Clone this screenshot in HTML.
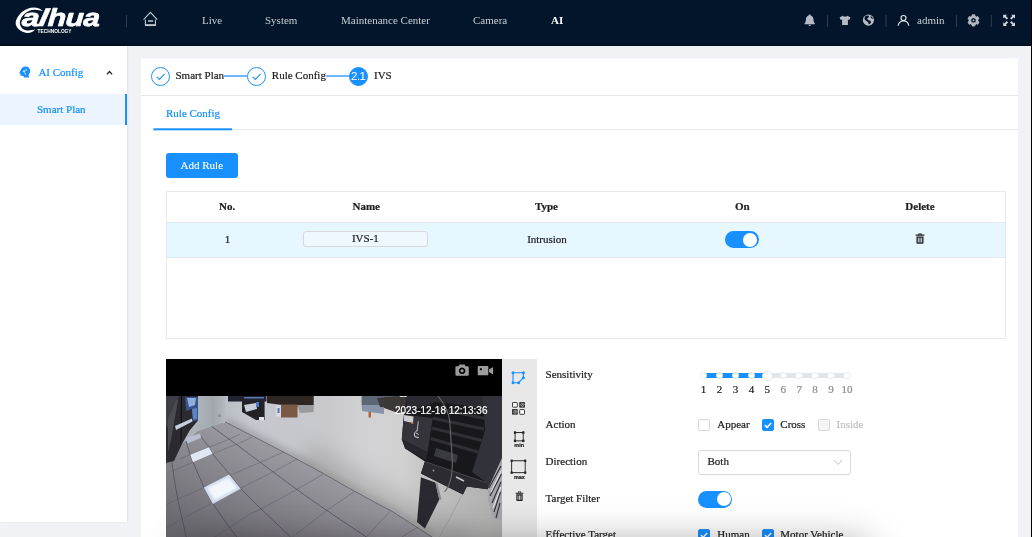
<!DOCTYPE html>
<html lang="en">
<head>
<meta charset="utf-8">
<title>AI Config - IVS</title>
<style>
*{box-sizing:border-box;margin:0;padding:0}
html,body{width:1032px;height:537px;overflow:hidden}
body{-webkit-text-stroke:.22px;will-change:transform;background:#f0f2f5;font-family:"Liberation Serif",serif;font-size:11px;color:#1f1f1f;position:relative}
.abs{position:absolute}
#hdr{position:absolute;left:0;top:0;width:1032px;height:46px;background:linear-gradient(#02152b 0,#02152b 43px,#020f21 45px,#020f21 46px)}
#hdr .nav{position:absolute;top:0;height:46px;line-height:41px;color:#c9cdd4;font-size:11px;white-space:nowrap;-webkit-text-stroke:0}
#hdr .sep{position:absolute;top:15px;width:1px;height:12px;background:#3c4a5e}
#side{position:absolute;left:0;top:46px;width:127px;height:476px;background:#fff;box-shadow:1px 0 2px rgba(0,21,41,.07)}
#side .grp{position:absolute;left:38.4px;top:18px;color:#1890ff;font-size:11px;line-height:16px}
#side .sel{position:absolute;left:0;top:48px;width:127px;height:31px;background:#ecf5ff;border-right:2px solid #1890ff}
#side .sel span{position:absolute;left:37px;top:7px;color:#1890ff;font-size:11px;line-height:16px}
#main{position:absolute;left:141px;top:58px;width:877px;height:479px;background:#fff;box-shadow:inset 0 1px 0 #f8f9fa}
.t{position:absolute;white-space:nowrap;line-height:16px;font-size:11px}
.b{font-weight:bold}

#steps .circ{position:absolute;top:9px;width:19px;height:19px;border-radius:50%;border:1px solid #1890ff;background:#fff}
#steps .circ svg{position:absolute;left:0;top:0}
#steps .ln{position:absolute;top:17px;height:2px;background:linear-gradient(#a9d5ff 0,#58acff 40%,#58acff 70%,#c5e2ff 100%)}
.hline{position:absolute;left:0;width:877px;height:1px;background:#e8e8e8}
#btn{position:absolute;left:25px;top:95.2px;width:71.6px;height:25px;background:#1890ff;border-radius:3px;color:#fff;text-align:center;line-height:24px;-webkit-text-stroke:.1px;font-size:11px}
#tbl{position:absolute;left:25px;top:133px;width:839.500px;height:148px;border:1px solid #e8e8e8}
#tbl .hd{position:absolute;left:0;top:0;width:838px;height:31px;border-bottom:1px solid #e8e8e8}
#tbl .row{position:absolute;left:0;top:31px;width:838px;height:35px;background:#e6f7ff;border-bottom:1px solid #e8e8e8}
.c{position:absolute;transform:translateX(-50%);white-space:nowrap;font-size:11px;line-height:14px}
.sw{position:absolute;width:34px;height:17px;border-radius:9px;background:#1890ff}
.sw i{position:absolute;right:1.5px;top:1.5px;width:14px;height:14px;border-radius:50%;background:#fff}
.cb{position:absolute;width:12px;height:12px;border:1px solid #d9d9d9;border-radius:2px;background:#fff}
.cb.on{background:#1890ff;border-color:#1890ff}
.cb.dis{background:#f5f5f5}
.cb svg{position:absolute;left:-1px;top:-1px}
</style>
</head>
<body>
<div id="hdr">
  <svg class="abs" style="left:0;top:0" width="1032" height="46" viewBox="0 0 1032 46">
    <g id="logo" fill="#fff" stroke="#fff" stroke-width="0.7" stroke-linejoin="round">
      <path stroke="none" d="M43.2 11.2 C42.5 10.8 40.6 9.1 39.0 8.5 C37.4 7.9 35.6 7.5 33.7 7.5 C31.8 7.5 29.7 7.9 27.7 8.7 C25.7 9.5 23.4 10.8 21.7 12.3 C20.0 13.8 18.3 16.0 17.3 17.7 C16.3 19.4 15.8 20.9 15.7 22.5 C15.6 24.1 16.1 25.8 17.0 27.2 C17.9 28.6 19.5 30.1 21.2 31.1 C22.9 32.1 25.3 32.8 27.1 33.0 C28.9 33.2 30.5 32.7 31.9 32.1 C33.2 31.5 34.7 30.0 35.2 29.6  C34.7 29.7 33.2 30.0 31.9 30.1 C30.5 30.2 28.6 30.6 27.1 30.4 C25.6 30.2 24.0 29.7 22.9 28.9 C21.8 28.1 20.9 26.7 20.4 25.5 C19.9 24.3 19.7 23.2 19.9 21.9 C20.1 20.6 20.6 19.1 21.4 17.7 C22.2 16.3 23.5 14.7 24.9 13.5 C26.2 12.3 27.9 11.3 29.5 10.7 C31.1 10.1 32.7 9.9 34.3 9.8 C35.9 9.7 37.5 10.0 39.0 10.2 C40.5 10.4 42.5 11.0 43.2 11.2Z"/>
      <text transform="translate(21.5 26.3) skewX(-3) scale(1.3 1)" font-family="Liberation Sans, sans-serif" font-weight="bold" font-style="italic" font-size="24.6">a</text>
      <text transform="translate(37.600 26.300) skewX(-9) scale(1.450 1)" stroke-width=".3" font-family="Liberation Sans, sans-serif" font-weight="bold" font-style="italic" font-size="24.600">l</text>
      <text transform="translate(47.4 26.3) skewX(-3) scale(1.22 1)" font-family="Liberation Sans, sans-serif" font-weight="bold" font-style="italic" font-size="24.6" letter-spacing="-0.4">hua</text>
      <text x="37.6" y="33" stroke="none" font-family="Liberation Sans, sans-serif" font-weight="bold" font-size="4.6" textLength="34" lengthAdjust="spacingAndGlyphs">TECHNOLOGY</text>
    </g>
    <g id="home" fill="none" stroke="#c5c9d0">
      <path d="M143.6 19.7 L150.4 12.4 L157.2 19.7" stroke-width="1.1"/>
      <path d="M145.4 19.8 V25.1 H155.4 V19.8" stroke-width="1.1"/>
      <path d="M145 25.2 H155.8" stroke-width="1.7"/>
      <path d="M148 21 H153" stroke-width="1.5"/>
    </g>
    <g fill="#b6bbc5">
      <path d="M809.7 14.4 c.7 0 1.1.5 1.1 1.1 c2 .6 2.7 2.400 2.700 4.200 c0 2 .6 3 1.400 3.700 v.9 h-10.400 v-.9 c.8-.7 1.400-1.700 1.400-3.700 c0-1.800.7-3.600 2.700-4.200 c0-.6.4-1.100 1.100-1.100z M808.400 24.800 h2.600 c0 .7-.6 1.100-1.300 1.100 s-1.300-.4-1.300-1.100z"/>
      <path d="M842.600 15.800 c.8 1.200 4 1.200 4.800 0 l3 1.700 l-1.200 2.400 l-1.300-.5 v5.500 h-5.800 v-5.500 l-1.300.5 l-1.200-2.400z"/>
      <circle cx="868.4" cy="20.100" r="5.600"/>
      <path d="M972.03 16.15 L972.20 14.75 L974.80 14.75 L974.97 16.15 L976.45 17.00 L977.74 16.44 L979.05 18.70 L977.92 19.54 L977.92 21.26 L979.05 22.10 L977.74 24.36 L976.45 23.80 L974.97 24.65 L974.80 26.05 L972.20 26.05 L972.03 24.65 L970.55 23.80 L969.26 24.36 L967.95 22.10 L969.08 21.26 L969.08 19.54 L967.95 18.70 L969.26 16.44 L970.55 17.00Z M973.5 17.7 a2.7 2.7 0 1 0 .01 0z" fill-rule="evenodd" stroke="#b6bbc5" stroke-width=".8" stroke-linejoin="round"/>
      <circle cx="973.5" cy="20.400" r=".9"/>
    </g>
    <g fill="#02152b">
      <path d="M865.200 16.300 c1.200-.8 2.600-.9 3.400-.6 l.4 1.200 l-1.400 1 l-.2 1.400 l1.600 1.200 l1.600.2 l.4 1.600 l-1 1.800 l-1.200.2 l-.6-1.800 l-1.600-1.400 l-1.600-1 l-.6-1.800z M870.800 16 l1.600 1.400 l.6 1.600 l-1.400-.4 l-1-1.400z" />
    </g>
    <g id="user" fill="none" stroke="#dfe2e7" stroke-width="1.200">
      <circle cx="903.500" cy="18" r="2.500"/>
      <path d="M898.200 25.800 c.4-3.200 2.600-4.800 5.300-4.800 s4.900 1.600 5.300 4.800"/>
    </g>
    <g id="full" fill="#d5d8de">
      <path d="M1003.200 14.700 h3.800 l-1.200 1.200 l2.300 2.300 l-1.400 1.400 l-2.300-2.300 l-1.200 1.200z"/>
      <path d="M1015 14.700 v3.800 l-1.200-1.200 l-2.300 2.300 l-1.400-1.400 l2.300-2.300 l-1.200-1.200z"/>
      <path d="M1003.200 26 v-3.800 l1.200 1.200 l2.300-2.300 l1.400 1.400 l-2.300 2.300 l1.200 1.200z"/>
      <path d="M1015 26 h-3.800 l1.200-1.200 l-2.300-2.300 l1.400-1.400 l2.300 2.300 l1.200-1.200z"/>
    </g>
    <g stroke="#2f3d53" stroke-width="1">
      <path d="M126.500 15 V27.300 M827.500 15 V27 M886 15 V27 M956.500 15 V27 M991.300 15 V27"/>
    </g>
  </svg>
  <div class="nav" style="left:202px">Live</div>
  <div class="nav" style="left:265px">System</div>
  <div class="nav" style="left:341px">Maintenance Center</div>
  <div class="nav" style="left:473px">Camera</div>
  <div class="nav b" style="left:551px;color:#fff">AI</div>
  <div class="nav" style="left:917px">admin</div>
</div>
<div id="side">
  <svg class="abs" style="left:19px;top:19.500px" width="12" height="13" viewBox="0 0 12 13"><g fill="#1890ff"><circle cx="6.500" cy="5.100" r="4.700"/><path d="M2.300 3.200 L0.200 7.100 L1.400 7.600 L1.400 9 Q1.400 9.700 2.200 9.700 L4.600 9.900 L5 11.500 L10.200 11.500 L9.300 8.500 L5 6Z"/></g><g fill="#fff" stroke="#fff" stroke-width=".55"><path d="M4.900 5.400 L7.300 3.900 M4.900 5.400 L6.500 7.900" fill="none"/><circle cx="4.900" cy="5.400" r=".6"/><circle cx="7.300" cy="3.900" r=".3"/><circle cx="6.500" cy="7.900" r=".3"/></g></svg>
  <div class="grp">AI Config</div>
  <svg class="abs" style="left:106.400px;top:24.200px" width="7" height="5.300" viewBox="0 0 8 6"><path d="M1 5 L4 1.700 L7 5" fill="none" stroke="#222" stroke-width="1.500"/></svg>
  <div class="sel"><span>Smart Plan</span></div>
</div>
<div id="main">
  <div id="steps">
    <div class="circ" style="left:10px"><svg width="17" height="17" viewBox="0 0 17 17"><path d="M4.6 8.8 L7.4 11.4 L12.6 5.8" fill="none" stroke="#1890ff" stroke-width="1.1"/></svg></div>
    <div class="t" style="left:34.5px;top:8.5px">Smart Plan</div>
    <div class="ln" style="left:83px;width:23px"></div>
    <div class="circ" style="left:106px"><svg width="17" height="17" viewBox="0 0 17 17"><path d="M4.6 8.8 L7.4 11.4 L12.6 5.8" fill="none" stroke="#1890ff" stroke-width="1.1"/></svg></div>
    <div class="t" style="left:130.800px;top:8.5px">Rule Config</div>
    <div class="ln" style="left:185px;width:24px"></div>
    <div class="circ" style="left:208px;background:#1890ff"></div>
    <div class="t" style="left:208px;top:10.300px;width:19px;text-align:center;color:#fff;-webkit-text-stroke:0;font-family:'Liberation Sans',sans-serif;font-size:11.500px;letter-spacing:-0.5px;text-indent:-0.5px">2.1</div>
    <div class="t" style="left:233px;top:8.5px">IVS</div>
  </div>
  <div class="hline" style="top:37px"></div>
  <div class="t" style="left:25px;top:46.5px;color:#1890ff">Rule Config</div>
  <div class="hline" style="top:71px;left:12px;width:865px;background:#ededed"></div>
  <svg class="abs" style="left:0;top:68px" width="120" height="6"><rect x="12.3" y="2.300" width="78.800" height="2" fill="#1890ff"/></svg>
  <div id="btn">Add Rule</div>
  <div id="tbl">
    <div class="hd">
      <div class="c b" style="left:60.200px;top:7px">No.</div>
      <div class="c b" style="left:199.200px;top:7px">Name</div>
      <div class="c b" style="left:379.500px;top:7px">Type</div>
      <div class="c b" style="left:575.300px;top:7px">On</div>
      <div class="c b" style="left:753px;top:7px">Delete</div>
    </div>
    <div class="row">
      <div class="c" style="left:60.400px;top:9px">1</div>
      <div class="abs" style="left:136.300px;top:8px;width:125.200px;height:16px;border:1px solid #d9d9d9;border-radius:3px;background:#edf9ff;text-align:center;font-size:11px;line-height:13px;text-indent:-1px">IVS-1</div>
      <div class="c" style="left:380px;top:9px">Intrusion</div>
      <div class="sw" style="left:557.700px;top:8.400px"><i></i></div>
      <svg class="abs" style="left:747.800px;top:10.300px" width="10" height="11.200" viewBox="0 0 11 12"><path d="M3.6 0.3h3.8v1.3h2.9v1.3H0.7V1.6h2.9z M4.6 1.1v0.5h1.8V1.1z M1.6 3.7h7.8v7.2q0 .8-.8.8H2.4q-.8 0-.8-.8z M3.1 5v5.3h1V5z M5 5v5.3h1V5z M6.9 5v5.3h1V5z" fill="#222" fill-rule="evenodd"/></svg>
    </div>
  </div>
  <div id="vid" class="abs" style="left:25px;top:301px;width:336px;height:178px;background:#000;overflow:hidden">
    <svg class="abs" style="left:0;top:37px" width="336" height="141" viewBox="166 396 336 141">
      <defs>
        <linearGradient id="wall" gradientUnits="userSpaceOnUse" x1="198" y1="0" x2="502" y2="0"><stop offset="0" stop-color="#aeb3ba"/><stop offset=".09" stop-color="#bbbfc6"/><stop offset=".17" stop-color="#c4c7ce"/><stop offset=".42" stop-color="#c8c8cc"/><stop offset=".55" stop-color="#d2d2d4"/><stop offset=".67" stop-color="#d1d1d2"/><stop offset=".8" stop-color="#bebebe"/><stop offset="1" stop-color="#afafae"/></linearGradient>
        <linearGradient id="lwall" gradientUnits="userSpaceOnUse" x1="196" y1="0" x2="225" y2="0"><stop offset="0" stop-color="#aeb4bc"/><stop offset=".6" stop-color="#a3a8af"/><stop offset="1" stop-color="#b2b6bd"/></linearGradient>
        <linearGradient id="floor" gradientUnits="userSpaceOnUse" x1="166" y1="537" x2="219.600" y2="419.100"><stop offset="0" stop-color="#65636a"/><stop offset="1" stop-color="#9d9ba2"/></linearGradient>
        <filter id="bl" filterUnits="userSpaceOnUse" x="100" y="300" width="500" height="400"><feGaussianBlur stdDeviation="3"/></filter>
        <filter id="bl2" filterUnits="userSpaceOnUse" x="100" y="300" width="500" height="400"><feGaussianBlur stdDeviation="10"/></filter>
        <filter id="bl1"><feGaussianBlur stdDeviation=".8"/></filter>
      </defs>
      <rect x="166" y="396" width="336" height="141" fill="url(#wall)"/>
      <path d="M300 460 Q320 471 333.5 479.3 T391 510.7 L432 537 L470 545" fill="none" stroke="#8c8c8c" stroke-width="40" opacity=".4" filter="url(#bl2)"/>
      <path d="M224.9 421.8 Q300 460 333.5 479.3 T391 510.7 L432 537" fill="none" stroke="#8a8a8d" stroke-width="10" opacity=".5" filter="url(#bl)"/>
      <path d="M166 463 L182 444 L198 431 L224.9 421.8 Q300 460 333.5 479.3 T391 510.7 L432 537 L166 537 Z" fill="url(#floor)"/>
      <path d="M224.9 421.8 Q300 460 333.5 479.3 T391 510.7 L432 537" fill="none" stroke="#55535b" stroke-width="1" opacity=".7"/>
      <path d="M211.0 426.0 C215.8 429.5 231.6 440.9 240.0 447.2 C248.4 453.4 252.4 456.6 261.7 463.5 C271.0 470.4 285.2 481.0 296.0 488.8 C306.8 496.6 315.0 502.4 326.7 510.4 C338.4 518.4 359.8 532.6 366.4 537.0 M199.0 434.0 C200.7 436.2 206.6 443.9 208.9 447.2 C211.2 450.5 209.0 449.1 212.6 453.8 C216.2 458.5 225.7 469.5 230.3 475.2 C235.0 480.9 235.1 482.3 240.5 488.2 C245.9 494.1 254.5 502.5 262.9 510.6 C271.2 518.7 286.0 532.6 290.6 537.0 M186.0 441.0 C186.7 443.3 189.0 451.2 190.2 454.7 C191.4 458.2 190.7 456.8 193.0 462.2 C195.3 467.6 200.9 480.5 204.2 487.3 C207.5 494.1 208.7 496.9 212.6 503.1 C216.5 509.3 223.5 519.0 227.5 524.6 C231.5 530.2 235.2 534.9 236.8 537.0 M172.0 462.0 C172.2 464.1 172.5 467.9 173.5 474.3 C174.5 480.7 176.1 490.5 178.1 500.4 C180.1 510.3 184.2 527.8 185.6 533.9 C187.0 540.0 186.2 536.5 186.3 537.0" fill="none" stroke="#45434d" stroke-width=".9" opacity=".72"/>
      <path d="M171.6 471.5 C175.2 469.9 186.2 465.1 193.0 462.2 C199.8 459.2 204.7 457.1 212.6 453.8 C220.5 450.5 233.9 445.4 240.5 442.6 C247.1 439.8 250.1 437.9 252.0 437.0 M180.0 459.0 C181.7 458.3 185.4 456.7 190.2 454.7 C195.0 452.7 202.7 449.7 208.9 447.2 C215.1 444.7 222.3 442.0 227.5 439.8 C232.7 437.6 237.9 435.0 240.0 434.0 M166.0 505.0 C167.9 504.1 170.8 502.3 177.2 499.4 C183.6 496.4 195.3 491.3 204.2 487.3 C213.0 483.3 220.5 479.6 230.3 475.2 C240.1 470.8 254.0 465.1 262.9 461.2 C271.8 457.3 280.2 453.5 283.6 452.0 M166.0 528.3 C169.3 526.4 177.8 521.3 185.6 517.1 C193.4 512.9 203.4 507.9 212.6 503.1 C221.8 498.3 230.9 493.2 240.5 488.2 C250.1 483.2 260.9 478.1 270.3 473.3 C279.7 468.5 292.4 461.6 296.8 459.2 M214.0 537.0 C215.0 536.5 214.3 537.5 220.0 533.9 C225.7 530.3 240.8 519.7 248.0 515.3 C255.2 510.9 255.2 512.1 263.5 507.7 C271.8 503.3 287.9 494.4 297.8 488.8 C307.7 483.2 318.9 476.7 323.1 474.3 M292.4 537.0 C298.4 532.4 318.1 517.1 328.5 509.5 C338.9 501.9 350.3 494.5 354.7 491.5 M366.4 537.0 C370.3 532.7 386.0 515.6 389.9 511.3 M418.0 527.0 C415.3 528.7 404.7 535.3 402.0 537.0" fill="none" stroke="#55535c" stroke-width=".7" opacity=".62"/>
      <path d="M185.3 437.7 L200.1 433.6 L201.2 437.7 L187.6 443.4Z" fill="#b9bfce"/>
      <path d="M190.2 454.7 L208.9 447.2 L212.6 453.8 L193 462.2Z" fill="#dfe7f2"/>
      <path d="M203.800 487.500 L229.200 474.600 L240.600 488.700 L212.800 504Z" fill="#cfdbea"/>
      <path d="M207.500 488 L228.500 477.500 L237 488 L214.500 500Z" fill="#f1f7fc" filter="url(#bl1)"/>
      <rect x="166" y="396" width="59" height="27" fill="url(#lwall)"/>
      <path d="M198 396 L224.9 396 L224.9 421.8 L198 431Z" fill="url(#lwall)"/>
      <rect x="218.5" y="414.5" width="2" height="2.5" fill="#83878e"/>
      <rect x="222.600" y="396" width="2.600" height="26" fill="#b4b8be" opacity=".8"/>
      <path d="M166 396 L198 396 L198 420.500 L190 430 L182 444 L174 461 L166 463Z" fill="#2a2a30"/>
      <path d="M166 396 L179 396 L170 424 L166 428Z" fill="#3e3e45"/>
      <path d="M181 396 L182 396 L181.500 440 L180.500 446Z" fill="#0d0d10"/>
      <path d="M185 397 L198 397 L198 420.500 L193 421 L192 409 L186 411Z" fill="#35538f"/>
      <path d="M187 398 L196 398 L195 405 L189 407Z" fill="#93aedc"/>
      <path d="M192 409 L197 408 L197 419 L193 419.500Z" fill="#5f82c4"/>
      <path d="M175 426 L192 418.500 L192.500 421.500 L176 430Z" fill="#c9cedd"/>
      <path d="M168 420 L176 400 L178 400 L171 440 L168 452Z" fill="#4b4b52"/>
      <rect x="228" y="396" width="38.500" height="5.500" fill="#1f2430"/>
      <rect x="244" y="397" width="20" height="1.500" fill="#5b78b0"/>
      <path d="M242 401 L264.6 401 L264.6 420 L256 420 L242 412Z" fill="#222226"/>
      <path d="M244 405 L256 403 L257 409 L246 412Z" fill="#c9cdd8"/>
      <path d="M256 402 L259 402 L259 407 L256 407Z" fill="#4a78d0"/>
      <path d="M259 417 L264 417 L264 420.500 L259 420Z" fill="#dfe3ee"/>
      <path d="M267 396 L313.7 396 L313.7 405 L305 408 L267 403Z" fill="#2d2623"/>
      <rect x="281" y="404.5" width="16.5" height="13" fill="#7b5a45"/>
      <rect x="276" y="405.500" width="5" height="11" fill="#d5dae6"/>
      <rect x="277.500" y="408" width="2" height="5" fill="#5677b5"/>
      <path d="M297 405 L313.7 405 L313.7 412 L300 413Z" fill="#9a9a9e"/>
      <rect x="361.6" y="396" width="38" height="9" fill="#5d6674"/>
      <path d="M361.6 405 L384 405 L384 414 L362 411Z" fill="#8793a8"/>
      <path d="M377 398 L399.4 396 L399.4 408 L380 407Z" fill="#3a3a3f"/>
      <rect x="368.5" y="412" width="2.5" height="5.5" fill="#b5623a"/>
      <path d="M384 397 L408 397 L408 411 L398 413 L384 408Z" fill="#3c3835"/>
      <path d="M405 412 L417 414 L416 424 L406 421Z" fill="#bfb9bd"/>
      <path d="M407 396 L502 396 L502 458 L487.800 489.200 L466.800 486.500 L462.900 494.400 L420.900 473.400 L424.900 461.600 L405.200 448.500 L401.800 439.300 L403.900 414.400Z" fill="#18181c"/>
      <path d="M407 396 L484 396 L484 408 L436 402 L406 413Z" fill="#2a2a30"/>
      <path d="M432.700 418.300 L484 429 M431.800 428 L481.500 440.500 M430.500 438.500 L478 452 M437 408.500 L485 418.500" stroke="#2f2f36" stroke-width="3.200" fill="none"/>
      <path d="M436 448 L458 455 L456 463 L434 456Z" fill="#3a3a41"/>
      <path d="M482.600 396 L502 396 L502 458 L487.800 489.200 L486.500 482.600 L472.100 472.100 L485.200 430.100Z" fill="#32323a"/>
      <path d="M403.900 414.400 L432.700 418.300 L427.500 452.400 L401.800 439.300Z" fill="#34343a"/>
      <path d="M401.800 439.300 L427.500 452.400 L426.200 460.300 L405.200 448.500Z" fill="#26262c"/>
      <path d="M418.300 421.300 L417.200 430.500" stroke="#c3c8d2" stroke-width=".9" fill="none"/>
      <path d="M417.600 430.500 C414.500 431.500 413.600 434.500 415.200 436.800 L418.800 437.600 M416.200 433 L418.600 434.600" stroke="#dfe4ec" stroke-width="1" fill="none"/>
      <path d="M403.500 415 L413.500 416.500 L413 423 L404 421Z" fill="#cfcfd3"/>
      <path d="M411 422 L413.500 422.500 L413.300 424 L411 423.500Z" fill="#c27a4a"/>
      <path d="M424.900 461.600 L486.500 482.600 L487.800 489.200 L466.800 486.500 L462.900 494.400 L420.900 473.400Z" fill="#2b2b31"/>
      <path d="M424.900 461.600 L486.500 482.600" stroke="#44444b" stroke-width="1" fill="none"/>
      <circle cx="433.500" cy="470.500" r=".9" fill="#9a9aa0"/>
      <path d="M420.900 477.300 L435.400 482.600 L439.300 499.600 L424.900 528.500 L417 521.900Z" fill="#29292f"/>
      <path d="M435.400 482.600 L437.600 483.400 L441.600 499.800 L439.300 499.600Z" fill="#8a8a90"/>
      <path d="M438 396 Q449 410 449.800 422 T452.400 461.600 Q452.400 484 444.500 491.800" fill="none" stroke="#66666c" stroke-width="1.100"/>
      <path d="M461.600 495.700 Q452 515 439.300 537" fill="none" stroke="#9a9aa0" stroke-width=".8"/>
      <path d="M456 477 L464 481" stroke="#c9c9cd" stroke-width="1.600"/>
      <path d="M487.800 489.200 L502 458 L502 520 L493 518 L488 500Z" fill="#a6a6aa"/>
      <path d="M489 488 L501 466 M490 496 L501.500 474 M492 503 L501 482 M494 512 L500.500 492 M496 518 L500 503" stroke="#2e2e34" stroke-width="1.100" fill="none"/>
      <path d="M491 492 L501.500 470 M493 508 L501 487" stroke="#f2f2f4" stroke-width=".9" fill="none"/>
    </svg>
    <div class="t" style="left:229px;top:42.500px;color:#fff;font-family:'Liberation Sans',sans-serif;font-size:11px;transform:scaleX(.905);transform-origin:0 0">2023-12-18 12:13:36</div>
    <svg class="abs" style="left:289px;top:5px" width="15" height="13" viewBox="0 0 15 13"><path d="M4.6 0.6h5l1 1.6h2q1.2 0 1.2 1.2v7.2q0 1.2-1.2 1.2H1.6q-1.2 0-1.2-1.2V3.4q0-1.2 1.2-1.2h2z M7.1 3.500a3.300 3.300 0 1 0 .01 0z M7.1 5.200a1.600 1.600 0 1 1-.01 0z" fill="#9c9c9c" fill-rule="evenodd"/></svg>
    <svg class="abs" style="left:311.300px;top:6.400px" width="17" height="12" viewBox="0 0 17 12"><path d="M1.6 1h8.800q.9 0 .9.900v7.500q0 .9-.9.900H1.600q-.9 0-.9-.9V1.900q0-.9.900-.9z M3.900 3.100a1.100 1.100 0 1 0 .01 0z M12 4.600 L16.100 1.900 V9.600 L12 7z" fill="#9c9c9c" fill-rule="evenodd"/></svg>
  </div>
  <div id="tools" class="abs" style="left:361px;top:301px;width:35px;height:178px;background:#e8e8e8">
    <svg class="abs" style="left:8.200px;top:11px" width="16" height="16" viewBox="0 0 16 16"><path d="M3 2.700 L13.400 2.700 L13.400 7.700 L8.600 12.700 L3 12.700Z" fill="none" stroke="#1890ff" stroke-width="1.100"/><g fill="#1890ff"><circle cx="3" cy="2.700" r="1.500"/><circle cx="13.400" cy="2.700" r="1.500"/><circle cx="13.400" cy="7.700" r="1.500"/><circle cx="8.600" cy="12.700" r="1.500"/><circle cx="3" cy="12.700" r="1.500"/></g></svg>
    <svg class="abs" style="left:10.100px;top:43.100px" width="13" height="12.800" viewBox="0 0 13 12.800"><g fill="#fff" stroke="#333" stroke-width="1"><rect x=".5" y=".5" width="4.800" height="4.700" rx=".6"/><rect x="7.700" y="7.600" width="4.800" height="4.700" rx=".6"/></g><g fill="#3a3a3a"><rect x="7.200" y="0" width="5.800" height="5.700" rx=".8"/><rect x="0" y="7.100" width="5.800" height="5.700" rx=".8"/></g><g stroke="#e8e8e8" stroke-width=".7" fill="none"><path d="M8.300 2.600 L10.800 5 M9.200 1.400 L11.900 4 M10.400 .8 L12.400 2.800"/><path d="M1.100 9.700 L3.600 12.100 M2 8.500 L4.700 11.100 M3.200 7.900 L5.200 9.900"/></g></svg>
    <svg class="abs" style="left:10.800px;top:72.200px" width="13" height="11.600" viewBox="0 0 15 12" preserveAspectRatio="none"><rect x="2.4" y="1.6" width="9.4" height="8.6" fill="none" stroke="#222" stroke-width="1"/><g fill="#222"><rect x="1" y="0.3" width="2.6" height="2.6"/><rect x="10.6" y="0.3" width="2.6" height="2.6"/><rect x="1" y="8.9" width="2.6" height="2.6"/><rect x="10.6" y="8.9" width="2.6" height="2.6"/></g></svg>
    <div class="c b" style="left:17.2px;top:83.2px;font-family:'Liberation Sans',sans-serif;font-size:5.5px;line-height:7px;color:#222">min</div>
    <svg class="abs" style="left:8px;top:100.400px" width="17.400" height="15.600" viewBox="0 0 19 16" preserveAspectRatio="none"><rect x="1.8" y="1.8" width="14.8" height="12.2" fill="none" stroke="#222" stroke-width="1"/><g fill="#222"><rect x="0.6" y="0.6" width="2.4" height="2.4"/><rect x="15.4" y="0.6" width="2.4" height="2.4"/><rect x="0.6" y="12.8" width="2.4" height="2.4"/><rect x="15.4" y="12.8" width="2.4" height="2.4"/></g></svg>
    <div class="c b" style="left:17.4px;top:115px;font-family:'Liberation Sans',sans-serif;font-size:5.5px;line-height:7px;color:#222">max</div>
    <svg class="abs" style="left:13px;top:132.200px" width="9" height="10.500" viewBox="0 0 11 12"><path d="M3.6 0.3h3.8v1.3h2.9v1.3H0.7V1.6h2.9z M4.6 1.1v0.5h1.8V1.1z M1.6 3.7h7.8v7.2q0 .8-.8.8H2.4q-.8 0-.8-.8z M3.1 5v5.3h1V5z M5 5v5.3h1V5z M6.9 5v5.3h1V5z" fill="#222" fill-rule="evenodd"/></svg>
  </div>
  <div class="t" style="left:404.600px;top:308px">Sensitivity</div>
  <div class="t" style="left:404.600px;top:358.2px">Action</div>
  <div class="t" style="left:404.600px;top:395px">Direction</div>
  <div class="t" style="left:404.600px;top:431.5px">Target Filter</div>
  <div class="t" style="left:404.600px;top:468px">Effective Target</div>
  <div id="sld" class="abs" style="left:557.500px;top:312px;width:160px;height:30px">
    <div class="abs" style="left:5px;top:3.2px;width:144px;height:5px;background:#e1e4e8;border-radius:2.5px"></div>
    <div class="abs" style="left:5px;top:3.2px;width:64px;height:5px;background:#1890ff"></div>
    <div class="abs" style="left:1.3px;top:1.9px;width:7.6px;height:7.6px;border-radius:50%;background:#fff;border:.5px solid #e8eaee"></div><div class="c" style="left:5.1px;top:11.5px;color:#1f1f1f">1</div><div class="abs" style="left:17.2px;top:1.9px;width:7.6px;height:7.6px;border-radius:50%;background:#fff;border:.5px solid #e8eaee"></div><div class="c" style="left:21.0px;top:11.5px;color:#1f1f1f">2</div><div class="abs" style="left:33.2px;top:1.9px;width:7.6px;height:7.6px;border-radius:50%;background:#fff;border:.5px solid #e8eaee"></div><div class="c" style="left:37.0px;top:11.5px;color:#1f1f1f">3</div><div class="abs" style="left:49.1px;top:1.9px;width:7.6px;height:7.6px;border-radius:50%;background:#fff;border:.5px solid #e8eaee"></div><div class="c" style="left:52.9px;top:11.5px;color:#1f1f1f">4</div><div class="abs" style="left:63.8px;top:0.5px;width:10.5px;height:10.5px;border-radius:50%;background:#fff;border:1px solid #e3e6ea"></div><div class="c" style="left:68.8px;top:11.5px;color:#1f1f1f">5</div><div class="abs" style="left:81.0px;top:1.9px;width:7.6px;height:7.6px;border-radius:50%;background:#fff;border:.5px solid #e8eaee"></div><div class="c" style="left:84.8px;top:11.5px;color:#8c8c8c">6</div><div class="abs" style="left:96.9px;top:1.9px;width:7.6px;height:7.6px;border-radius:50%;background:#fff;border:.5px solid #e8eaee"></div><div class="c" style="left:100.7px;top:11.5px;color:#8c8c8c">7</div><div class="abs" style="left:112.8px;top:1.9px;width:7.6px;height:7.6px;border-radius:50%;background:#fff;border:.5px solid #e8eaee"></div><div class="c" style="left:116.6px;top:11.5px;color:#8c8c8c">8</div><div class="abs" style="left:128.7px;top:1.9px;width:7.6px;height:7.6px;border-radius:50%;background:#fff;border:.5px solid #e8eaee"></div><div class="c" style="left:132.5px;top:11.5px;color:#8c8c8c">9</div><div class="abs" style="left:144.7px;top:1.9px;width:7.6px;height:7.6px;border-radius:50%;background:#fff;border:.5px solid #e8eaee"></div><div class="c" style="left:148.5px;top:11.5px;color:#8c8c8c">10</div>
  </div>
  <div class="cb" style="left:557px;top:361.300px"></div><div class="t" style="left:576.3px;top:358.2px">Appear</div>
  <div class="cb on" style="left:620.5px;top:361.300px"><svg width="12" height="12" viewBox="0 0 12 12"><path d="M2.9 6.1 L5.1 8.3 L9.2 3.9" fill="none" stroke="#fff" stroke-width="1.5"/></svg></div><div class="t" style="left:639.3px;top:358.2px">Cross</div>
  <div class="cb dis" style="left:676.5px;top:361.300px"></div><div class="t" style="left:695.6px;top:358.2px;color:#bfbfbf">Inside</div>
  <div class="abs" style="left:557px;top:392px;width:153px;height:24.5px;border:1px solid #d9d9d9;border-radius:3px;background:#fff"><span class="t" style="left:8.500px;top:2.200px">Both</span><svg class="abs" style="left:134px;top:8px" width="10" height="7" viewBox="0 0 10 7"><path d="M0.8 1 L5 5.4 L9.2 1" fill="none" stroke="#b5b5b5" stroke-width="0.9"/></svg></div>
  <div class="sw" style="left:557px;top:432.600px"><i></i></div>
  <div class="cb on" style="left:557px;top:471px"><svg width="12" height="12" viewBox="0 0 12 12"><path d="M2.9 6.1 L5.1 8.3 L9.2 3.9" fill="none" stroke="#fff" stroke-width="1.5"/></svg></div><div class="t" style="left:576.3px;top:468px">Human</div>
  <div class="cb on" style="left:620.5px;top:471px"><svg width="12" height="12" viewBox="0 0 12 12"><path d="M2.9 6.1 L5.1 8.3 L9.2 3.9" fill="none" stroke="#fff" stroke-width="1.5"/></svg></div><div class="t" style="left:639.3px;top:468px">Motor Vehicle</div>
</div>
<div class="abs" style="left:185px;top:546px;width:682px;height:60px;border-radius:8px;box-shadow:0 0 40px rgba(0,0,0,.43)"></div>
<div class="abs" style="left:1030.5px;top:0;width:1.5px;height:537px;background:#000"></div>
</body>
</html>
